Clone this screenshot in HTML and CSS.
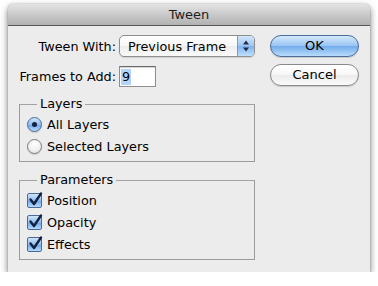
FILE: index.html
```html
<!DOCTYPE html>
<html>
<head>
<meta charset="utf-8">
<link rel="stylesheet" href="styles.css">
</head>
<body>
<div class="window">
  <div class="titlebar">Tween</div>
  <div class="content">
    <div class="main">
      <div class="row row-with">
        <span class="label">Tween With:</span>
        <div class="popup">
          <span class="popup-text">Previous Frame</span>
          <span class="popup-arrows">
            <svg width="16" height="22" viewBox="0 0 16 22"><path d="M5 9.5 L8 5.5 L11 9.5 Z" fill="#1e2b4a"/><path d="M5 12.5 L8 16.5 L11 12.5 Z" fill="#1e2b4a"/></svg>
          </span>
        </div>
      </div>
      <div class="row row-frames">
        <span class="label">Frames to Add:</span>
        <div class="field"><span class="sel">9</span></div>
      </div>
      <fieldset class="group">
        <legend>Layers</legend>
        <div class="opt"><span class="radio on"><span class="dot"></span></span>All Layers</div>
        <div class="opt"><span class="radio"></span>Selected Layers</div>
      </fieldset>
      <fieldset class="group group-params">
        <legend>Parameters</legend>
        <div class="opt"><span class="check"><svg width="17" height="17" viewBox="0 0 17 17"><path d="M3.5 8.5 L7 13 L14 2.5" fill="none" stroke="#14213f" stroke-width="2.4" stroke-linecap="round" stroke-linejoin="round"/></svg></span>Position</div>
        <div class="opt"><span class="check"><svg width="17" height="17" viewBox="0 0 17 17"><path d="M3.5 8.5 L7 13 L14 2.5" fill="none" stroke="#14213f" stroke-width="2.4" stroke-linecap="round" stroke-linejoin="round"/></svg></span>Opacity</div>
        <div class="opt"><span class="check"><svg width="17" height="17" viewBox="0 0 17 17"><path d="M3.5 8.5 L7 13 L14 2.5" fill="none" stroke="#14213f" stroke-width="2.4" stroke-linecap="round" stroke-linejoin="round"/></svg></span>Effects</div>
      </fieldset>
    </div>
    <div class="buttons">
      <div class="btn btn-default">OK</div>
      <div class="btn">Cancel</div>
    </div>
  </div>
</div>
</body>
</html>
```
FILE: styles.css
```css
html, body {
  margin: 0;
  padding: 0;
  background: #ffffff;
}
body {
  font-family: "DejaVu Sans", "Liberation Sans", sans-serif;
  font-size: 12.8px;
  color: #000;
}
.window {
  margin: 4px 0 0 8px;
  width: 362px;
  height: 268px;
  background: #ececec;
  border-radius: 5px 5px 0 0;
  box-shadow: 0 3px 7px rgba(0,0,0,0.55), 0 0 1px rgba(0,0,0,0.5);
  overflow: hidden;
}
.titlebar {
  height: 21px;
  line-height: 21px;
  text-align: center;
  font-size: 13px;
  color: #1e1e1e;
  background: linear-gradient(#e4e4e4, #c9c9c9 50%, #b2b2b2);
  border-bottom: 1px solid #555;
}
.content {
  display: flex;
  padding: 9px 0 0 11px;
}
.main {
  width: 236px;
  display: flex;
  flex-direction: column;
}
.row {
  display: flex;
  align-items: center;
}
.label {
  width: 97px;
  padding-right: 3px;
  text-align: right;
  white-space: nowrap;
}
.popup {
  width: 134px;
  height: 20px;
  border: 1px solid #8d8d8d;
  border-radius: 5px;
  background: linear-gradient(#ffffff, #f6f6f6 50%, #ececec 51%, #fafafa);
  display: flex;
  align-items: center;
  justify-content: space-between;
  overflow: hidden;
  box-shadow: 0 1px 1px rgba(0,0,0,0.12);
}
.popup-text {
  padding-left: 8px;
}
.popup-arrows {
  width: 16px;
  height: 20px;
  display: flex;
  align-items: center;
  justify-content: center;
  border-left: 1px solid #7d9ac2;
  background: linear-gradient(#d3e6fb, #9ec6f1 50%, #7eb3ec 51%, #bfe0fd);
}
.popup-arrows svg {
  display: block;
}
.row-frames {
  margin-top: 9px;
}
.field {
  width: 34px;
  height: 19px;
  border: 1px solid #8e8e8e;
  border-top-color: #6a6a6a;
  background: #fff;
  box-shadow: inset 0 1px 1px rgba(0,0,0,0.18);
  display: flex;
  align-items: center;
  padding-left: 1px;
}
.sel {
  background: #b3d3fb;
  padding: 0 1px;
  line-height: 16px;
}
.group {
  margin: 9px 0 0 0;
  padding: 1px 0 4px 7px;
  border: 1px solid #9b9b9b;
  border-top-color: #a3a3a3;
  min-width: 0;
}
.group legend {
  margin-left: 10px;
  padding: 0 3px;
  line-height: 16px;
}
.group-params {
  margin-top: 10px;
}
.opt {
  height: 22px;
  display: flex;
  align-items: center;
}
.radio {
  width: 13px;
  height: 13px;
  border-radius: 50%;
  border: 1px solid #7a7a7a;
  background: radial-gradient(circle at 50% 30%, #ffffff, #f0f0f0 60%, #d8d8d8);
  margin-right: 5px;
  display: flex;
  align-items: center;
  justify-content: center;
  box-shadow: 0 1px 1px rgba(0,0,0,0.15);
}
.radio.on {
  border-color: #4b6a97;
  background: linear-gradient(#cfe4fb, #8fbdef 50%, #6aa5e7 51%, #b7dafd);
}
.dot {
  width: 5px;
  height: 5px;
  border-radius: 50%;
  background: #14213f;
}
.check {
  width: 13px;
  height: 13px;
  border: 1px solid #4b6a97;
  border-radius: 2px;
  background: linear-gradient(#cfe4fb, #8fbdef 50%, #6aa5e7 51%, #b7dafd);
  margin-right: 5px;
  position: relative;
}
.check svg {
  position: absolute;
  left: -1px;
  top: -3px;
}
.buttons {
  margin-left: 15px;
  display: flex;
  flex-direction: column;
  gap: 7px;
}
.btn {
  width: 87px;
  height: 20px;
  line-height: 20px;
  text-align: center;
  border: 1px solid #8a8a8a;
  border-radius: 11px;
  background: linear-gradient(#ffffff, #f7f7f7 50%, #ebebeb 51%, #fbfbfb);
  box-shadow: 0 1px 1px rgba(0,0,0,0.15);
  font-size: 13px;
}
.btn-default {
  border-color: #4a6c9b;
  background: linear-gradient(#d4e8fc, #98c4f2 50%, #72acea 51%, #b8dcfd);
}
```
